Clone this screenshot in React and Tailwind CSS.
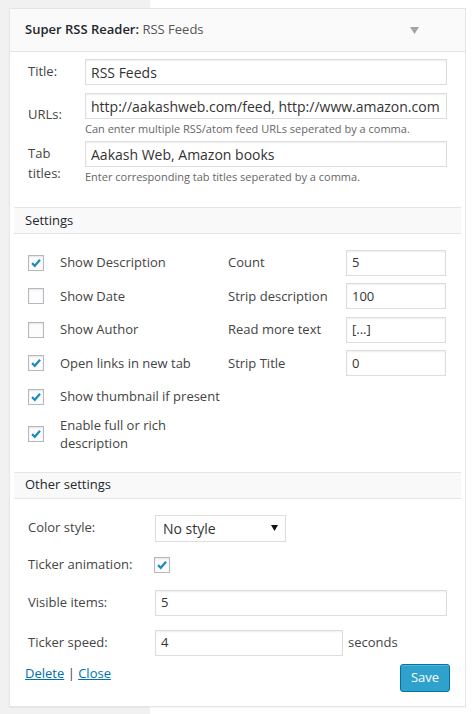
import React from "react";

function Check({ checked }) {
  return (
    <span className="inline-flex w-[16px] h-[16px] shrink-0 items-center justify-center border border-[#b4b9be] bg-[#fdfdfd] shadow-[inset_0_1px_2px_rgba(0,0,0,0.1)]">
      {checked && (
        <svg width="14" height="14" viewBox="0 0 16 16">
          <path d="M3.5 8.2 L6.6 11.2 L12.6 4.2" fill="none" stroke="#1e8cbe" strokeWidth="2.6" strokeLinecap="butt" strokeLinejoin="miter" />
        </svg>
      )}
    </span>
  );
}

function Input({ value, className = "" }) {
  return (
    <div className={"h-[26px] border border-[#dddddd] bg-white shadow-[inset_0_1px_2px_rgba(0,0,0,0.07)] flex items-center pl-[5px] overflow-hidden whitespace-nowrap text-[#333] " + className}>
      {value}
    </div>
  );
}

function SectionHeader({ children }) {
  return (
    <div className="h-[27px] border-y border-[#e5e5e5] bg-[#f9f9f9] flex items-center pl-[11px] text-[13px] text-[#23282d]">
      {children}
    </div>
  );
}

export default function App() {
  const left = [
    ["Show Description", true],
    ["Show Date", false],
    ["Show Author", false],
    ["Open links in new tab", true],
    ["Show thumbnail if present", true],
  ];
  const right = [
    ["Count", "5"],
    ["Strip description", "100"],
    ["Read more text", "[...]"],
    ["Strip Title", "0"],
  ];
  return (
    <div className="w-[474px] h-[714px] overflow-hidden bg-[linear-gradient(to_right,#f1f1f1_150px,#ffffff_150px)] pt-[8px] pl-[9px] font-['Open_Sans',sans-serif] text-[13px] text-[#444]">
      <div className="w-[457px] h-[699px] bg-white border border-[#e5e5e5] shadow-[0_1px_1px_rgba(0,0,0,0.04)]">
        {/* Header */}
        <div className="h-[43px] bg-[#fafafa] border-b border-[#e5e5e5] flex items-center justify-between pl-[15px] pr-[46px]">
          <div className="text-[13px] text-[#23282d]">
            <span className="font-semibold">Super RSS Reader:</span>{" "}
            <span className="text-[#555]">RSS Feeds</span>
          </div>
          <svg width="9" height="7" viewBox="0 0 9 7">
            <path d="M0 0 H9 L4.5 7 Z" fill="#a0a5aa" />
          </svg>
        </div>

        <div className="px-[4px] pt-[7px]">
          {/* Top table */}
          <div className="px-[14px]">
            <div className="flex items-center">
              <div className="w-[57px] shrink-0">Title:</div>
              <Input value="RSS Feeds" className="flex-1 text-[14px]" />
            </div>
            <div className="flex items-center mt-[8px]">
              <div className="w-[57px] shrink-0">URLs:</div>
              <div className="flex-1 min-w-0">
                <Input value="http://aakashweb.com/feed, http://www.amazon.com" className="text-[14px]" />
                <div className="text-[11px] leading-[16px] mt-[2px] text-[#666]">
                  Can enter multiple RSS/atom feed URLs seperated by a comma.
                </div>
              </div>
            </div>
            <div className="flex items-center mt-[4px]">
              <div className="w-[57px] shrink-0 leading-[20px]">
                Tab
                <br />
                titles:
              </div>
              <div className="flex-1 min-w-0">
                <Input value="Aakash Web, Amazon books" className="text-[14px]" />
                <div className="text-[11px] leading-[16px] mt-[2px] text-[#666]">
                  Enter corresponding tab titles seperated by a comma.
                </div>
              </div>
            </div>
          </div>

          {/* Settings */}
          <div className="mt-[22px]">
            <SectionHeader>Settings</SectionHeader>
          </div>
          <div className="flex pl-[14px] pt-[12px]">
            <div className="w-[200px] shrink-0">
              {left.map(([label, c]) => (
                <div key={label} className="h-[33.5px] flex items-center">
                  <Check checked={c} />
                  <span className="ml-[16px] whitespace-nowrap">{label}</span>
                </div>
              ))}
              <div className="h-[40px] flex items-center">
                <Check checked={true} />
                <span className="ml-[16px] leading-[18px]">
                  Enable full or rich
                  <br />
                  description
                </span>
              </div>
            </div>
            <div>
              {right.map(([label, v]) => (
                <div key={label} className="h-[33.5px] flex items-center">
                  <div className="w-[118px] shrink-0">{label}</div>
                  <Input value={v} className="w-[100px] text-[13px]" />
                </div>
              ))}
            </div>
          </div>

          {/* Other settings */}
          <div className="mt-[18px]">
            <SectionHeader>Other settings</SectionHeader>
          </div>
          <div className="px-[14px] pt-[16px]">
            <div className="flex items-center h-[27px]">
              <div className="w-[127px] shrink-0">Color style:</div>
              <div className="w-[131px] h-[27px] border border-[#dddddd] bg-white flex items-center justify-between pl-[7px] pr-[7px] text-[14px] text-[#333]">
                <span>No style</span>
                <svg width="7" height="6" viewBox="0 0 7 6">
                  <path d="M0 0 H7 L3.5 6 Z" fill="#111" />
                </svg>
              </div>
            </div>
            <div className="flex items-center h-[22px] mt-[12px]">
              <div className="w-[126px] shrink-0">Ticker animation:</div>
              <Check checked={true} />
            </div>
            <div className="flex items-center mt-[14px]">
              <div className="w-[127px] shrink-0">Visible items:</div>
              <Input value="5" className="flex-1 text-[13px]" />
            </div>
            <div className="flex items-center mt-[14px]">
              <div className="w-[127px] shrink-0">Ticker speed:</div>
              <Input value="4" className="w-[188px] text-[13px]" />
              <span className="ml-[5px]">seconds</span>
            </div>
          </div>
          <div className="flex items-start justify-between mt-[8px] pl-[11px] pr-[11px]">
            <div className="leading-[18px]">
              <span className="text-[#0073aa] underline">Delete</span>
              <span className="text-[#444]"> | </span>
              <span className="text-[#0073aa] underline">Close</span>
            </div>
            <div className="h-[28px] w-[50px] rounded-[3px] bg-[#2ea2cc] border border-[#0074a2] shadow-[inset_0_1px_0_rgba(120,200,230,0.5)] flex items-center justify-center text-white text-[13px]">
              Save
            </div>
          </div>
        </div>
      </div>
    </div>
  );
}
